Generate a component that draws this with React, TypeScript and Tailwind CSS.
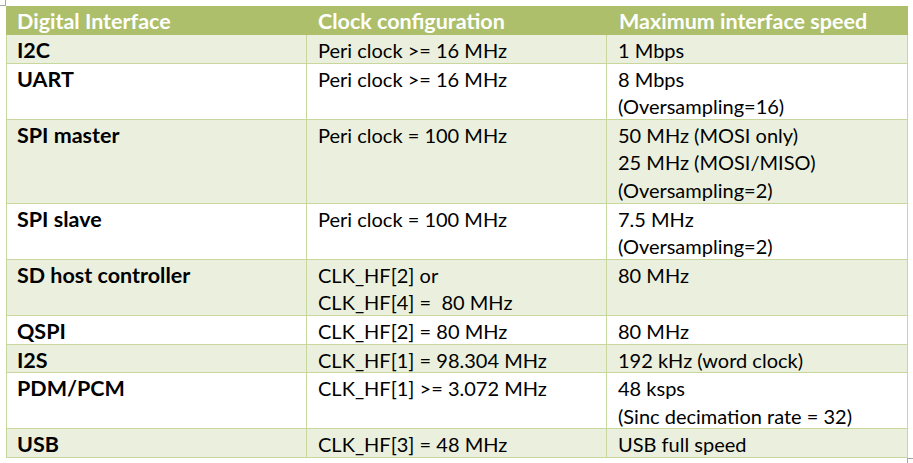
type Row = {
  name: string;
  clock: string[];
  speed: string[];
};

const rows: Row[] = [
  { name: 'I2C', clock: ['Peri clock >= 16 MHz'], speed: ['1 Mbps'] },
  { name: 'UART', clock: ['Peri clock >= 16 MHz'], speed: ['8 Mbps', '(Oversampling=16)'] },
  {
    name: 'SPI master',
    clock: ['Peri clock = 100 MHz'],
    speed: ['50 MHz (MOSI only)', '25 MHz (MOSI/MISO)', '(Oversampling=2)'],
  },
  { name: 'SPI slave', clock: ['Peri clock = 100 MHz'], speed: ['7.5 MHz', '(Oversampling=2)'] },
  { name: 'SD host controller', clock: ['CLK_HF[2] or', 'CLK_HF[4] =  80 MHz'], speed: ['80 MHz'] },
  { name: 'QSPI', clock: ['CLK_HF[2] = 80 MHz'], speed: ['80 MHz'] },
  { name: 'I2S', clock: ['CLK_HF[1] = 98.304 MHz'], speed: ['192 kHz (word clock)'] },
  { name: 'PDM/PCM', clock: ['CLK_HF[1] >= 3.072 MHz'], speed: ['48 ksps', '(Sinc decimation rate = 32)'] },
  { name: 'USB', clock: ['CLK_HF[3] = 48 MHz'], speed: ['USB full speed'] },
];

const Lines = ({ lines }: { lines: string[] }) => (
  <div className="translate-y-[2px]">
    {lines.map((l) => (
      <div key={l} className="whitespace-pre">
        {l}
      </div>
    ))}
  </div>
);

export default function App() {
  return (
    <div className="relative w-[913px] h-[463px] bg-white font-['Lato',sans-serif] text-[20px] text-black">
      {/* word table corner marks */}
      <div className="absolute left-0 top-0 w-[6px] h-[6px] border-r border-b border-[#a6a6a6]" />
      <div className="absolute left-[907px] top-[458px] w-[6px] h-[5px] border-l border-t border-[#a6a6a6]" />

      <div className="pt-[6px] pl-[6px]">
        <div className="grid grid-cols-[301px_300px_301px] leading-[27.6px]">
          <div className="h-[29px] bg-[#adbf6a] text-white font-bold text-[21.5px] pl-[11px] leading-[30px]">
            Digital Interface
          </div>
          <div className="h-[29px] bg-[#adbf6a] text-white font-bold text-[21.5px] pl-[11px] leading-[30px]">
            Clock configuration
          </div>
          <div className="h-[29px] bg-[#adbf6a] text-white font-bold text-[21.5px] pl-[12px] leading-[30px]">
            Maximum interface speed
          </div>

          {rows.map((r, i) => {
            const bg = i % 2 === 0 ? 'bg-[#ebf0de]' : 'bg-white';
            return [
              <div key={r.name + 'a'} className={`${bg} border-l border-r border-b border-[#c8d89c] pl-[10px] font-bold text-[21.5px]`}>
                <Lines lines={[r.name]} />
              </div>,
              <div key={r.name + 'b'} className={`${bg} border-r border-b border-[#c8d89c] pl-[11px]`}>
                <Lines lines={r.clock} />
              </div>,
              <div key={r.name + 'c'} className={`${bg} border-r border-b border-[#c8d89c] pl-[11px]`}>
                <Lines lines={r.speed} />
              </div>,
            ];
          })}
        </div>
      </div>
    </div>
  );
}
